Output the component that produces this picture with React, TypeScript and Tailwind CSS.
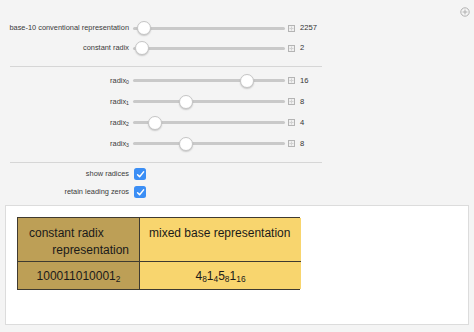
import React from "react";

const font = { fontFamily: '"Liberation Sans", Arial, sans-serif' };

function ValueBox() {
  return (
    <svg width="7" height="7" viewBox="0 0 7 7" className="shrink-0">
      <rect x="0.5" y="0.5" width="6" height="6" fill="#f0f0f0" stroke="#b4b4b4" strokeWidth="1" />
      <line x1="3.5" y1="1.5" x2="3.5" y2="5.5" stroke="#d2d2d2" strokeWidth="1" />
      <line x1="1.5" y1="3.5" x2="5.5" y2="3.5" stroke="#d2d2d2" strokeWidth="1" />
    </svg>
  );
}

function SliderRow({
  label,
  pos,
  value,
  h,
}: {
  label: React.ReactNode;
  pos: number;
  value: string;
  h: string;
}) {
  return (
    <div className={`flex items-center ${h}`}>
      <div className="w-[129px] text-right text-[7.4px] leading-none text-[#3a3a3a]">{label}</div>
      <div className="relative ml-[4px] h-[3px] w-[152px] rounded-full bg-[#c9c9c9]">
        <div
          className="absolute top-1/2 h-[14px] w-[14px] -translate-x-1/2 -translate-y-1/2 rounded-full border border-[#c6c6c6] bg-white shadow-[0_1px_1.5px_rgba(0,0,0,0.18)]"
          style={{ left: pos }}
        />
      </div>
      <div className="ml-[3px]">
        <ValueBox />
      </div>
      <span className="ml-[5px] text-[7.6px] leading-none text-[#333]">{value}</span>
    </div>
  );
}

function CheckRow({ label, h }: { label: string; h: string }) {
  return (
    <div className={`flex items-center ${h}`}>
      <div className="w-[129px] text-right text-[7.4px] leading-none text-[#3a3a3a]">{label}</div>
      <div className="ml-[5px] flex h-[12px] w-[12px] items-center justify-center rounded-[2.5px] bg-[#3b8ef5]">
        <svg width="9" height="9" viewBox="0 0 9 9">
          <path d="M1.6 4.8 L3.6 6.8 L7.6 1.9" fill="none" stroke="white" strokeWidth="1.5" strokeLinecap="round" strokeLinejoin="round" />
        </svg>
      </div>
    </div>
  );
}

function Sub({ children }: { children: React.ReactNode }) {
  return <sub className="text-[70%]">{children}</sub>;
}

export default function App() {
  return (
    <div className="relative h-[332px] w-[474px] overflow-hidden bg-[#f4f4f4]" style={font}>
      <svg width="10" height="10" viewBox="0 0 10 10" className="absolute right-[4px] top-[7px]">
        <circle cx="5" cy="5" r="4.2" fill="none" stroke="#b0b0b0" strokeWidth="1" />
        <line x1="5" y1="2.6" x2="5" y2="7.4" stroke="#b0b0b0" strokeWidth="1" />
        <line x1="2.6" y1="5" x2="7.4" y2="5" stroke="#b0b0b0" strokeWidth="1" />
      </svg>

      <div className="flex flex-col pt-[18px]">
        <SliderRow label="base-10 conventional representation" pos={11} value="2257" h="h-[20px]" />
        <SliderRow label="constant radix" pos={9} value="2" h="h-[20px]" />
        <div className="ml-[10px] mt-[8px] h-px w-[312px] bg-[#d6d6d6]" />
        <div className="mt-[3px]" />
        <SliderRow label={<>radix<Sub>0</Sub></>} pos={114} value="16" h="h-[21px]" />
        <SliderRow label={<>radix<Sub>1</Sub></>} pos={53} value="8" h="h-[21px]" />
        <SliderRow label={<>radix<Sub>2</Sub></>} pos={22} value="4" h="h-[21px]" />
        <SliderRow label={<>radix<Sub>3</Sub></>} pos={53} value="8" h="h-[21px]" />
        <div className="ml-[10px] mt-[8px] h-px w-[312px] bg-[#d6d6d6]" />
        <div className="mt-[2px]" />
        <CheckRow label="show radices" h="h-[18px]" />
        <CheckRow label="retain leading zeros" h="h-[18px]" />

        <div className="ml-[5px] mt-[4px] h-[120px] w-[464px] border border-[#dcdcdc] bg-white pl-[11px] pt-[11px]">
          <div className="grid w-[283px] grid-cols-[122px_161px] border-[1.5px] border-[#3f3a30] text-[12px] text-[#1a1a1a]">
            <div className="h-[44px] border-b-[1.5px] border-r-[1.5px] border-[#3f3a30] bg-[#bd9f56] pl-[11px] pr-[10px] pt-[7px] leading-[17px]">
              <div className="text-left">constant radix</div>
              <div className="text-right">representation</div>
            </div>
            <div className="h-[44px] border-b-[1.5px] border-[#3f3a30] bg-[#f8d56e] pl-[9px] pt-[7px] leading-[17px]">
              mixed base representation
            </div>
            <div className="flex h-[27px] items-center justify-center border-r-[1.5px] border-[#3f3a30] bg-[#bd9f56]">
              <span>
                100011010001<Sub>2</Sub>
              </span>
            </div>
            <div className="flex h-[27px] items-center justify-center bg-[#f8d56e]">
              <span>
                4<Sub>8</Sub>1<Sub>4</Sub>5<Sub>8</Sub>1<Sub>16</Sub>
              </span>
            </div>
          </div>
        </div>
      </div>
    </div>
  );
}
